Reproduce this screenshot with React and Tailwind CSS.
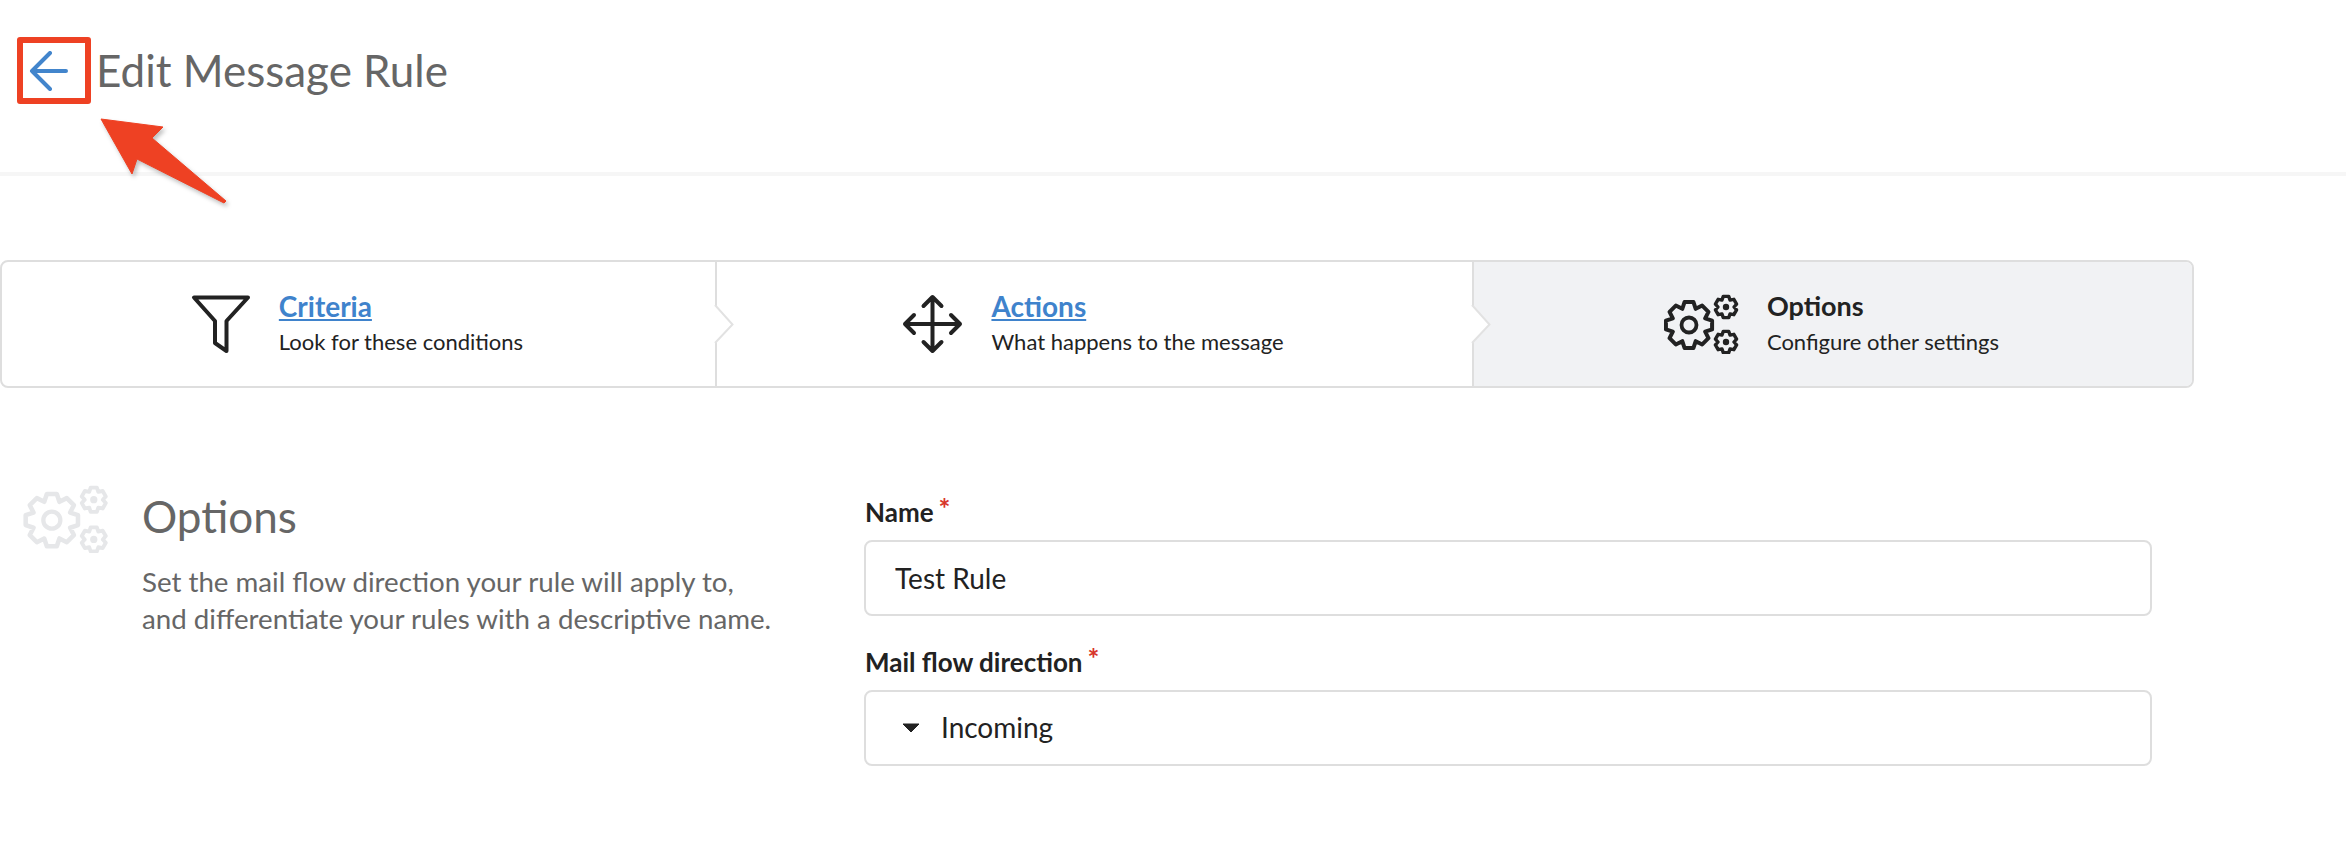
const gearPath = (cx, cy, outer, inner, teeth) => {
  const step = (Math.PI * 2) / teeth;
  const pts = [];
  for (let i = 0; i < teeth; i++) {
    const a = i * step - Math.PI / 2;
    [
      [inner, -0.5],
      [outer, -0.24],
      [outer, 0.24],
      [inner, 0.5],
    ].forEach(([r, k]) => {
      pts.push(`${(cx + r * Math.cos(a + k * step)).toFixed(2)} ${(cy + r * Math.sin(a + k * step)).toFixed(2)}`);
    });
  }
  return `M${pts.join("L")}Z`;
};

function GearsIcon({ className, stroke }) {
  return (
    <svg viewBox="0 0 75 60" className={className} fill="none" stroke={stroke} strokeLinejoin="round">
      <path d={gearPath(25, 31, 23.5, 17.5, 8)} strokeWidth="4" />
      <circle cx="25" cy="31" r="7.5" strokeWidth="3.8" />
      <path d={gearPath(62, 13, 11, 8, 6)} strokeWidth="3.4" />
      <circle cx="62" cy="13" r="3.2" fill={stroke} stroke="none" />
      <path d={gearPath(62, 48, 11, 8, 6)} strokeWidth="3.4" />
      <circle cx="62" cy="48" r="3.2" fill={stroke} stroke="none" />
    </svg>
  );
}

function Chevron() {
  return (
    <svg viewBox="0 0 20 40" className="absolute -right-[19px] top-[43px] z-10 h-[40px] w-[20px]">
      <path d="M1 0L18.5 19.5L1 38V40H0V0Z" fill="#ffffff" stroke="none" />
      <path d="M1 0L18.5 19.5L1 38" fill="none" stroke="#e2e2e2" strokeWidth="2" />
    </svg>
  );
}

function Required() {
  return <span className="ml-[5px] align-[3px] text-[28px] leading-none font-bold text-[#d8352b]">*</span>;
}

export default function App() {
  return (
    <div className="relative min-h-[858px] bg-white font-['Lato',sans-serif] text-[#222222]">
      <header className="flex h-[176px] items-start gap-[5px] border-b-4 border-[#f6f6f6] pt-[37px] pl-[17px]">
        <button className="flex h-[67px] w-[74px] items-center rounded-[3px] border-[6px] border-[#ee4123] pl-[6px]">
          <svg viewBox="0 0 40 40" className="h-[40px] w-[40px]" fill="none" stroke="#4285cc" strokeWidth="4" strokeLinecap="round" strokeLinejoin="round">
            <path d="M3 20H37M21 2L3 20L21 38" />
          </svg>
        </button>
        <h1 className="h-[67px] text-[44px] leading-[67px] font-normal text-[#666666]">Edit Message Rule</h1>
      </header>

      <svg viewBox="0 0 240 210" className="absolute top-0 left-0 h-[210px] w-[240px] drop-shadow-[2px_3px_2px_rgba(0,0,0,0.25)]">
        <path d="M101 119L163 127L152 138L226 201L224 203L137 159L132 174Z" fill="#ee4123" stroke="#ee4123" strokeWidth="1" strokeLinejoin="round" />
      </svg>

      <div className="mt-[84px] flex h-[128px] w-[2194px] rounded-[8px] border-2 border-[#dedede]">
        <div className="relative flex w-[715px] items-center justify-center gap-[28px] border-r-2 border-[#dedede] pr-[3px]">
          <svg viewBox="0 0 60 60" className="h-[60px] w-[60px]" fill="none" stroke="#222222" strokeWidth="4" strokeLinejoin="round">
            <path d="M3 3.5H57L35.5 27V57L24 49V27L3 3.5Z" />
          </svg>
          <div className="pt-px">
            <a href="#" className="block text-[28px] leading-[34px] font-bold text-[#3f83cc] underline">Criteria</a>
            <p className="text-[22px] leading-[38px]">Look for these conditions</p>
          </div>
          <Chevron />
        </div>
        <div className="relative flex w-[757px] items-center justify-center gap-[28px] border-r-2 border-[#dedede] pr-[3px]">
          <svg viewBox="0 0 61 60" className="h-[60px] w-[61px]" fill="none" stroke="#222222" strokeWidth="4" strokeLinecap="round" strokeLinejoin="round">
            <path d="M30.5 3V57M3 30H58M21.5 12L30.5 3L39.5 12M21.5 48L30.5 57L39.5 48M12 21L3 30L12 39M49 21L58 30L49 39" />
          </svg>
          <div className="pt-px">
            <a href="#" className="block text-[28px] leading-[34px] font-bold text-[#3f83cc] underline">Actions</a>
            <p className="text-[22px] leading-[38px]">What happens to the message</p>
          </div>
          <Chevron />
        </div>
        <div className="flex flex-1 items-center justify-center gap-[28px] rounded-r-[6px] bg-[#f1f2f4] pr-[3px]">
          <GearsIcon className="h-[60px] w-[75px]" stroke="#222222" />
          <div className="pt-px">
            <p className="text-[27px] leading-[34px] font-bold">Options</p>
            <p className="text-[22px] leading-[38px]">Configure other settings</p>
          </div>
        </div>
      </div>

      <div className="mt-[97px] flex pl-[22px]">
        <div className="flex w-[842px] gap-[32px]">
          <GearsIcon className="h-[68px] w-[88px] shrink-0" stroke="#e6e7e9" />
          <div className="mt-[6px]">
            <h2 className="text-[44px] leading-[50px] font-normal text-[#666666]">Options</h2>
            <p className="mt-[22px] text-[27.7px] leading-[37px] text-[#666666]">
              Set the mail flow direction your rule will apply to,
              <br />
              and differentiate your rules with a descriptive name.
            </p>
          </div>
        </div>
        <div className="mt-[9px] w-[1288px]">
          <label className="block h-[34px] pl-px text-[26px] leading-[34px] font-bold">
            Name<Required />
          </label>
          <input
            defaultValue="Test Rule"
            className="mt-[12px] block h-[76px] w-full rounded-[8px] border-2 border-[#dedede] pl-[29px] text-[28px] text-[#222222] outline-none"
          />
          <label className="mt-[28px] block h-[34px] pl-px text-[26px] leading-[34px] font-bold">
            Mail flow direction<Required />
          </label>
          <div className="mt-[12px] flex h-[76px] items-center gap-[21px] rounded-[8px] border-2 border-[#dedede] pb-[2px] pl-[36px] text-[28px]">
            <svg viewBox="0 0 18 10" className="mt-[2px] h-[10px] w-[18px]" fill="#222222" stroke="#222222" strokeWidth="1" strokeLinejoin="round">
              <path d="M1 1H17L9 9Z" />
            </svg>
            <span>Incoming</span>
          </div>
        </div>
      </div>
    </div>
  );
}
